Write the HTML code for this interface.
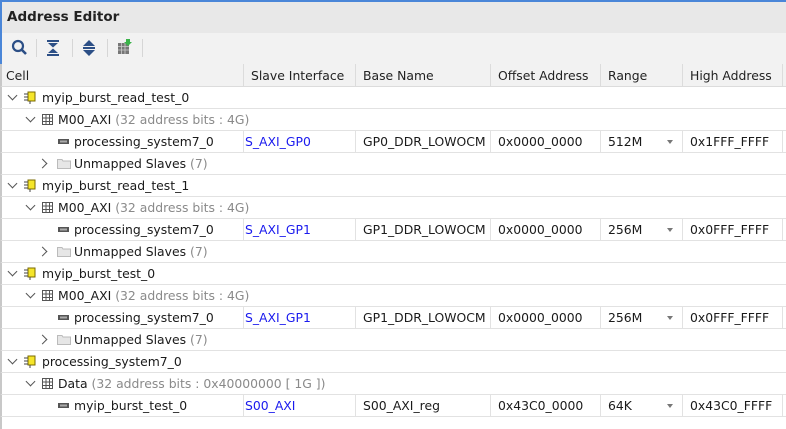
<!DOCTYPE html>
<html><head><meta charset="utf-8"><style>
*{margin:0;padding:0;box-sizing:border-box}
body{width:786px;height:429px;overflow:hidden;background:#fff;font-family:"DejaVu Sans","Liberation Sans",sans-serif;font-size:12.4px;color:#1a1a1a;position:relative}
.abs{position:absolute}
.title{left:0;top:0;width:786px;height:33px;background:#e8e8e8;border-top:2px solid #4a86d8;border-left:2px solid #4a86d8}
.title span{position:absolute;left:5px;top:7px;font-weight:bold;font-size:13.5px;color:#222}
.tb{left:0;top:33px;width:786px;height:31px;background:#f2f2f2;border-left:2px solid #4a86d8}
.sep{position:absolute;top:6px;width:1px;height:18px;background:#d6d6d6}
.hdr{left:0;top:64px;width:786px;height:23px;background:#f2f2f2;border-bottom:1px solid #dcdcdc;border-left:2px solid #c8c8c8}
.hdr div{position:absolute;top:0;height:22px;line-height:23px;padding-left:7px;border-left:1px solid #dcdcdc;color:#222}
.row{position:absolute;left:0;width:786px;height:22px;border-bottom:1px solid #e2e2e2;border-left:2px solid #c8c8c8}
.row .t{position:absolute;top:0;line-height:21px;white-space:nowrap}
.g{color:#8a8a8a}
.c{position:absolute;top:0;height:21px;line-height:21px;padding-left:7px;border-left:1px solid #e2e2e2;white-space:nowrap}
.b{color:#1a1aee}
.chev{position:absolute;top:6px;width:7px;height:7px;border-right:1.3px solid #555;border-bottom:1.3px solid #555}
.dn{transform:rotate(45deg)}
.rt{transform:rotate(-45deg);top:7px}
.dd{position:absolute;left:66px;top:9px;width:0;height:0;border-left:3px solid transparent;border-right:3px solid transparent;border-top:4px solid #777}
</style></head><body>
<div class="abs title"><span>Address Editor</span></div>
<div class="abs tb">
<svg class="abs" style="left:9px;top:6px" width="18" height="18" viewBox="0 0 18 18"><circle cx="7" cy="7" r="5" fill="none" stroke="#2c4f86" stroke-width="2.2"/><path d="M10.5 10.5 L15 15" stroke="#2c4f86" stroke-width="2.6"/></svg>
<div class="sep" style="left:34px"></div>
<svg class="abs" style="left:44px;top:7px" width="14" height="16" viewBox="0 0 14 16"><rect x="1" y="0" width="12" height="2" fill="#2c4f86"/><path d="M2 3 L12 3 L7 7.5Z M2 13 L12 13 L7 8.5Z" fill="#2c4f86"/><rect x="1" y="14" width="12" height="2" fill="#2c4f86"/></svg>
<div class="sep" style="left:70px"></div>
<svg class="abs" style="left:80px;top:7px" width="14" height="16" viewBox="0 0 14 16"><path d="M7 0 L13 6 L1 6Z M7 16 L13 10 L1 10Z" fill="#2c4f86"/><rect x="1" y="7" width="12" height="2" fill="#2c4f86"/></svg>
<div class="sep" style="left:105px"></div>
<svg class="abs" style="left:115px;top:6px" width="16" height="16" viewBox="0 0 16 16"><rect x="1" y="4" width="11" height="11" fill="#777"/><path d="M1 7.5H12M1 11H12M4.5 4V15M8 4V15" stroke="#ccc" stroke-width="0.8"/><path d="M9 0H13V3H15L11 7L7 3H9Z" fill="#3bb34a"/></svg>
<div class="sep" style="left:140px"></div>
</div>
<div class="abs hdr">
<div style="left:-2px;width:243px;border-left:none;padding-left:6px">Cell</div>
<div style="left:241px;width:112px">Slave Interface</div>
<div style="left:353px;width:135px">Base Name</div>
<div style="left:488px;width:110px">Offset Address</div>
<div style="left:598px;width:82px">Range</div>
<div style="left:680px;width:100px">High Address</div>
<div style="left:780px;width:4px"></div>
</div>

<div class="row" style="top:87px"><div class="chev dn" style="left:7px;top:5px"></div><svg class="abs" style="left:22px;top:4px" width="13" height="13" viewBox="0 0 13 13"><rect x="4" y="1" width="7" height="9" fill="#f5e52a" stroke="#7a6a00"/><path d="M0 3H4M0 6H4M0 9H4M6 10V13" stroke="#444"/></svg><span class="t" style="left:40px">myip_burst_read_test_0</span></div>
<div class="row" style="top:109px"><div class="chev dn" style="left:25px;top:5px"></div><svg class="abs" style="left:40px;top:5px" width="11" height="11" viewBox="0 0 11 11"><rect x="0.5" y="0.5" width="10" height="10" fill="#fff" stroke="#555"/><path d="M0 4H11M0 7.5H11M4 0V11M7.5 0V11" stroke="#555"/></svg><span class="t" style="left:56px">M00_AXI <span class="g">(32 address bits : 4G)</span></span></div>
<div class="row" style="top:131px"><svg class="abs" style="left:56px;top:8px" width="11" height="5"><rect width="11" height="5" fill="#555"/><rect x="2" y="1.5" width="7" height="2" fill="#aaa"/></svg><span class="t" style="left:72px">processing_system7_0</span><div class="c b" style="left:241px;width:112px;padding-left:1px">S_AXI_GP0</div><div class="c" style="left:353px;width:135px">GP0_DDR_LOWOCM</div><div class="c" style="left:488px;width:110px">0x0000_0000</div><div class="c" style="left:598px;width:82px">512M<span class="dd"></span></div><div class="c" style="left:680px;width:100px">0x1FFF_FFFF</div><div class="c" style="left:780px;width:4px"></div></div>
<div class="row" style="top:153px"><div class="chev rt" style="left:37px"></div><svg class="abs" style="left:55px;top:5px" width="14" height="11" viewBox="0 0 14 11"><path d="M0.5 1.5H5L6 3H13.5V10.5H0.5Z" fill="#e6e6e6" stroke="#bbb"/></svg><span class="t" style="left:72px">Unmapped Slaves <span class="g">(7)</span></span></div>

<div class="row" style="top:175px"><div class="chev dn" style="left:7px;top:5px"></div><svg class="abs" style="left:22px;top:4px" width="13" height="13" viewBox="0 0 13 13"><rect x="4" y="1" width="7" height="9" fill="#f5e52a" stroke="#7a6a00"/><path d="M0 3H4M0 6H4M0 9H4M6 10V13" stroke="#444"/></svg><span class="t" style="left:40px">myip_burst_read_test_1</span></div>
<div class="row" style="top:197px"><div class="chev dn" style="left:25px;top:5px"></div><svg class="abs" style="left:40px;top:5px" width="11" height="11" viewBox="0 0 11 11"><rect x="0.5" y="0.5" width="10" height="10" fill="#fff" stroke="#555"/><path d="M0 4H11M0 7.5H11M4 0V11M7.5 0V11" stroke="#555"/></svg><span class="t" style="left:56px">M00_AXI <span class="g">(32 address bits : 4G)</span></span></div>
<div class="row" style="top:219px"><svg class="abs" style="left:56px;top:8px" width="11" height="5"><rect width="11" height="5" fill="#555"/><rect x="2" y="1.5" width="7" height="2" fill="#aaa"/></svg><span class="t" style="left:72px">processing_system7_0</span><div class="c b" style="left:241px;width:112px;padding-left:1px">S_AXI_GP1</div><div class="c" style="left:353px;width:135px">GP1_DDR_LOWOCM</div><div class="c" style="left:488px;width:110px">0x0000_0000</div><div class="c" style="left:598px;width:82px">256M<span class="dd"></span></div><div class="c" style="left:680px;width:100px">0x0FFF_FFFF</div><div class="c" style="left:780px;width:4px"></div></div>
<div class="row" style="top:241px"><div class="chev rt" style="left:37px"></div><svg class="abs" style="left:55px;top:5px" width="14" height="11" viewBox="0 0 14 11"><path d="M0.5 1.5H5L6 3H13.5V10.5H0.5Z" fill="#e6e6e6" stroke="#bbb"/></svg><span class="t" style="left:72px">Unmapped Slaves <span class="g">(7)</span></span></div>

<div class="row" style="top:263px"><div class="chev dn" style="left:7px;top:5px"></div><svg class="abs" style="left:22px;top:4px" width="13" height="13" viewBox="0 0 13 13"><rect x="4" y="1" width="7" height="9" fill="#f5e52a" stroke="#7a6a00"/><path d="M0 3H4M0 6H4M0 9H4M6 10V13" stroke="#444"/></svg><span class="t" style="left:40px">myip_burst_test_0</span></div>
<div class="row" style="top:285px"><div class="chev dn" style="left:25px;top:5px"></div><svg class="abs" style="left:40px;top:5px" width="11" height="11" viewBox="0 0 11 11"><rect x="0.5" y="0.5" width="10" height="10" fill="#fff" stroke="#555"/><path d="M0 4H11M0 7.5H11M4 0V11M7.5 0V11" stroke="#555"/></svg><span class="t" style="left:56px">M00_AXI <span class="g">(32 address bits : 4G)</span></span></div>
<div class="row" style="top:307px"><svg class="abs" style="left:56px;top:8px" width="11" height="5"><rect width="11" height="5" fill="#555"/><rect x="2" y="1.5" width="7" height="2" fill="#aaa"/></svg><span class="t" style="left:72px">processing_system7_0</span><div class="c b" style="left:241px;width:112px;padding-left:1px">S_AXI_GP1</div><div class="c" style="left:353px;width:135px">GP1_DDR_LOWOCM</div><div class="c" style="left:488px;width:110px">0x0000_0000</div><div class="c" style="left:598px;width:82px">256M<span class="dd"></span></div><div class="c" style="left:680px;width:100px">0x0FFF_FFFF</div><div class="c" style="left:780px;width:4px"></div></div>
<div class="row" style="top:329px"><div class="chev rt" style="left:37px"></div><svg class="abs" style="left:55px;top:5px" width="14" height="11" viewBox="0 0 14 11"><path d="M0.5 1.5H5L6 3H13.5V10.5H0.5Z" fill="#e6e6e6" stroke="#bbb"/></svg><span class="t" style="left:72px">Unmapped Slaves <span class="g">(7)</span></span></div>

<div class="row" style="top:351px"><div class="chev dn" style="left:7px;top:5px"></div><svg class="abs" style="left:22px;top:4px" width="13" height="13" viewBox="0 0 13 13"><rect x="4" y="1" width="7" height="9" fill="#f5e52a" stroke="#7a6a00"/><path d="M0 3H4M0 6H4M0 9H4M6 10V13" stroke="#444"/></svg><span class="t" style="left:40px">processing_system7_0</span></div>
<div class="row" style="top:373px"><div class="chev dn" style="left:25px;top:5px"></div><svg class="abs" style="left:40px;top:5px" width="11" height="11" viewBox="0 0 11 11"><rect x="0.5" y="0.5" width="10" height="10" fill="#fff" stroke="#555"/><path d="M0 4H11M0 7.5H11M4 0V11M7.5 0V11" stroke="#555"/></svg><span class="t" style="left:56px">Data <span class="g">(32 address bits : 0x40000000 [ 1G ])</span></span></div>
<div class="row" style="top:395px"><svg class="abs" style="left:56px;top:8px" width="11" height="5"><rect width="11" height="5" fill="#555"/><rect x="2" y="1.5" width="7" height="2" fill="#aaa"/></svg><span class="t" style="left:72px">myip_burst_test_0</span><div class="c b" style="left:241px;width:112px;padding-left:1px">S00_AXI</div><div class="c" style="left:353px;width:135px">S00_AXI_reg</div><div class="c" style="left:488px;width:110px">0x43C0_0000</div><div class="c" style="left:598px;width:82px">64K<span class="dd"></span></div><div class="c" style="left:680px;width:100px">0x43C0_FFFF</div><div class="c" style="left:780px;width:4px"></div></div>
<div class="abs" style="left:0;top:417px;width:2px;height:12px;background:#c8c8c8"></div>
</body></html>
